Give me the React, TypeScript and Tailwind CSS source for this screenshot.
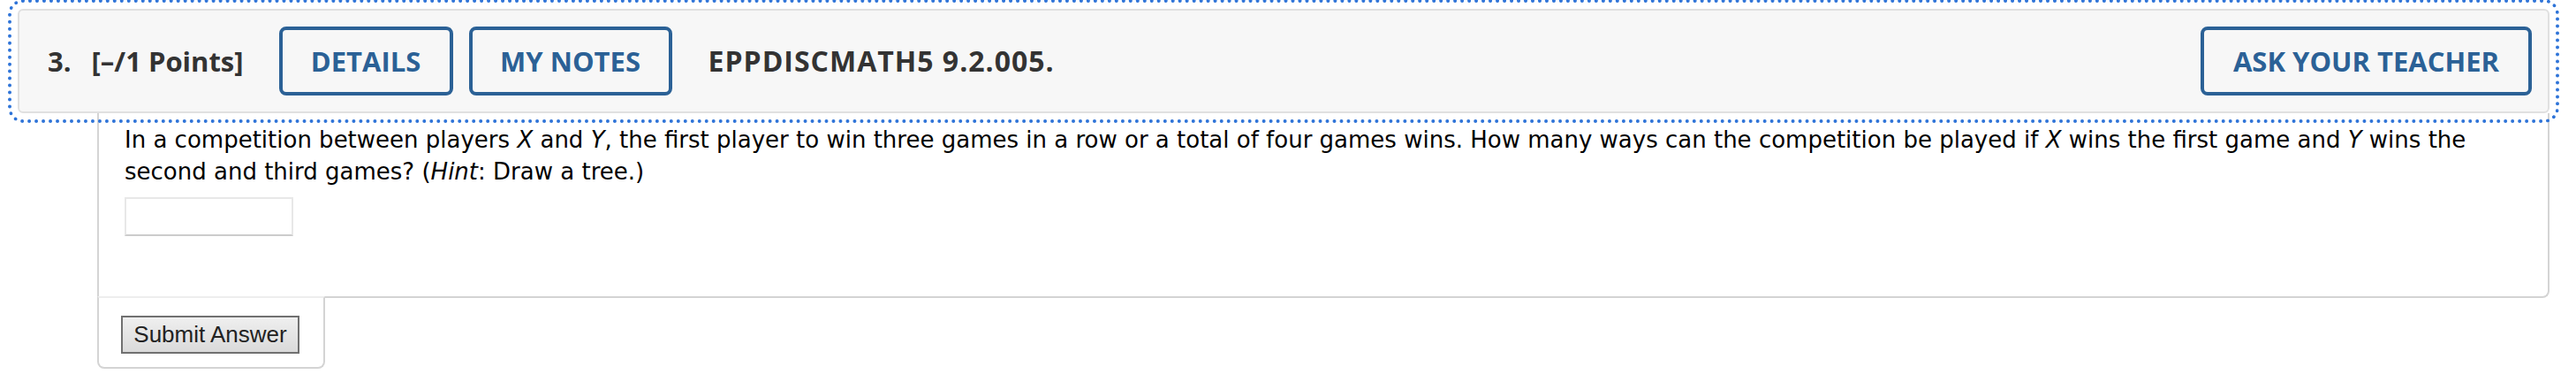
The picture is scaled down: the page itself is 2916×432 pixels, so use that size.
export default function App() {
  const headerFont = { fontFamily: '"Open Sans", "Liberation Sans", sans-serif' };

  return (
    <div className="w-[2916px] h-[432px] bg-white">
      {/* Question header with focus ring */}
      <div
        className="ml-[20px] mr-[30px] mt-[10px] flex h-[118px] items-center rounded-[6px] border-2 border-[#e0e0e0] bg-[#f7f7f7] pl-[32px] pr-[18px] outline-[4px] outline-dotted outline-[#2f74d8] outline-offset-[7px]"
        style={headerFont}
      >
        <span className="text-[31px] font-bold text-[#333333]">3.</span>
        <span className="ml-[23px] text-[31px] font-bold text-[#333333]">[–/1 Points]</span>
        <button className="ml-[40px] flex h-[78px] w-[197px] items-center justify-center rounded-[8px] border-4 border-[#2b6196] text-[31px] font-bold text-[#2b6196]">
          DETAILS
        </button>
        <button className="ml-[18px] flex h-[78px] w-[230px] items-center justify-center rounded-[8px] border-4 border-[#2b6196] text-[31px] font-bold text-[#2b6196]">
          MY NOTES
        </button>
        <span className="ml-[41px] text-[32px] tracking-[1px] font-bold text-[#333333]">EPPDISCMATH5 9.2.005.</span>
        <button className="ml-auto flex h-[78px] w-[375px] items-center justify-center rounded-[8px] border-4 border-[#2b6196] text-[31px] font-bold text-[#2b6196]">
          ASK YOUR TEACHER
        </button>
      </div>

      {/* Question body */}
      <div className="ml-[110px] mr-[30px] rounded-br-[8px] border-2 border-t-0 border-[#d4d4d4] bg-white pb-[68px] pl-[29px] pr-[24px] pt-[12px]">
        <p
          className="text-[26px] leading-[36px] text-black"
          style={{ fontFamily: 'Verdana, "DejaVu Sans", sans-serif' }}
        >
          In a competition between players <i>X</i> and <i>Y</i>, the first player to win three games in a row or a
          total of four games wins. How many ways can the competition be played if <i>X</i> wins the first game and{" "}
          <i>Y</i> wins the second and third games? (<i>Hint</i>: Draw a tree.)
        </p>
        <input
          type="text"
          className="mt-[11px] block h-[44px] w-[191px] border-2 border-[#e8e8e8] border-b-[#cccccc] bg-white"
        />
      </div>

      {/* Submit tab */}
      <div className="ml-[110px] -mt-[2px] w-[258px] rounded-b-[8px] border-2 border-[#d4d4d4] border-t-[#eeeeee] bg-white pb-[15px] pl-[25px] pt-[20px]">
        <button
          className="h-[43px] w-[202px] border-2 border-[#707070] bg-gradient-to-b from-[#efefef] to-[#dadada] text-[26px] text-[#222222]"
          style={{ fontFamily: '"Liberation Sans", Arial, sans-serif' }}
        >
          Submit Answer
        </button>
      </div>
    </div>
  );
}
